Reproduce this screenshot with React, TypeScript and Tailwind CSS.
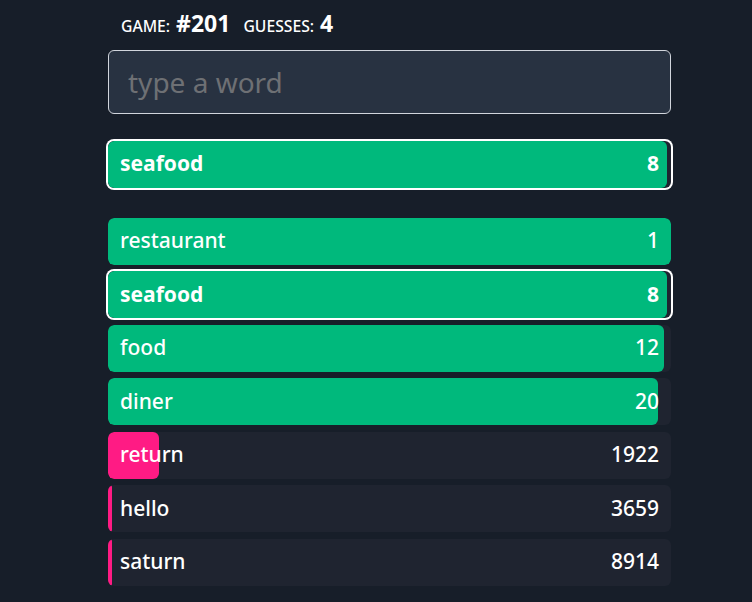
const guesses = [
  { word: 'restaurant', rank: 1, bar: 563, color: 'green' },
  { word: 'seafood', rank: 8, bar: 559, color: 'green', active: true },
  { word: 'food', rank: 12, bar: 556, color: 'green' },
  { word: 'diner', rank: 20, bar: 550, color: 'green' },
  { word: 'return', rank: 1922, bar: 51, color: 'pink' },
  { word: 'hello', rank: 3659, bar: 4, color: 'pink' },
  { word: 'saturn', rank: 8914, bar: 4, color: 'pink' },
];

type Guess = (typeof guesses)[number];

function GuessRow({ g }: { g: Guess }) {
  return (
    <div
      className={`relative h-[47px] rounded-md bg-[#1f2430] overflow-hidden ${
        g.active ? 'ring-2 ring-white' : ''
      }`}
    >
      <div
        className={`absolute inset-y-0 left-0 rounded-md ${
          g.color === 'green' ? 'bg-[#00b97c]' : 'bg-[#ff1b84]'
        }`}
        style={{ width: g.bar }}
      />
      <div
        className={`relative flex h-full items-center justify-between pl-[12px] pr-[12px] text-[21px] text-white ${
          g.active ? 'font-bold' : 'font-medium'
        }`}
      >
        <span>{g.word}</span>
        <span>{g.rank}</span>
      </div>
    </div>
  );
}

export default function App() {
  const current = guesses.find((g) => g.active)!;

  return (
    <div className="min-h-screen bg-[#171e29] font-['Noto_Sans',sans-serif]">
      <div className="ml-[108px] w-[563px] pt-[6px]">
        {/* Header */}
        <div className="flex items-baseline pl-[13px] text-white">
          <span className="text-[15.7px] font-medium uppercase">Game:</span>
          <span className="ml-[6px] text-[23px] font-bold">#201</span>
          <span className="ml-[13px] text-[15.7px] font-medium uppercase">Guesses:</span>
          <span className="ml-[6px] text-[23px] font-bold">4</span>
        </div>

        {/* Input */}
        <input
          placeholder="type a word"
          className="mt-[9px] block h-[64px] w-full rounded-md border border-gray-300 bg-[#283241] px-[19px] text-[28px] text-white placeholder:text-[#6e7074] outline-none"
        />

        {/* Latest guess */}
        <div className="mt-[27px]">
          <GuessRow g={current} />
        </div>

        {/* All guesses */}
        <div className="mt-[30px] flex flex-col gap-[6.5px]">
          {guesses.map((g) => (
            <GuessRow key={g.word} g={g} />
          ))}
        </div>
      </div>
    </div>
  );
}
